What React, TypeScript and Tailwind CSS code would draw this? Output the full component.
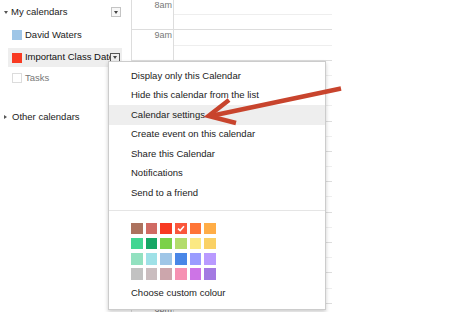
import React from "react";

const swatches = [
  ["#ac725e", "#d06b64", "#f83a22", "#fa573c", "#ff7537", "#ffad46"],
  ["#42d692", "#16a765", "#7bd148", "#b3dc6c", "#fbe983", "#fad165"],
  ["#92e1c0", "#9fe1e7", "#9fc6e7", "#4986e7", "#9a9cff", "#b99aff"],
  ["#c2c2c2", "#cabdbf", "#cca6ac", "#f691b2", "#cd74e6", "#a47ae2"],
];

const menuItems = [
  "Display only this Calendar",
  "Hide this calendar from the list",
  "Calendar settings",
  "Create event on this calendar",
  "Share this Calendar",
  "Notifications",
  "Send to a friend",
];

// labels under the popup are left empty, they can't be seen anyway
const hours = ["8am", "9am", "", "", "", "", "", "", "", "", "6pm"];

function DropBox({ dark }: { dark?: boolean }) {
  return (
    <div
      className={
        "w-[10px] h-[10px] flex items-center justify-center border " +
        (dark ? "border-[#555] bg-[#eee]" : "border-[#c4c4c4] bg-[#f7f7f7]")
      }
    >
      <div className="w-0 h-0 border-l-[2.5px] border-r-[2.5px] border-t-[3px] border-l-transparent border-r-transparent border-t-[#444]" />
    </div>
  );
}

export default function App() {
  return (
    <div className="relative w-[474px] h-[312px] overflow-hidden bg-white font-['Liberation_Sans',Arial,sans-serif] text-[9.5px] text-[#222]">
      <div className="flex h-full">
        {/* left list */}
        <div className="w-[131px] flex flex-col">
          <div className="mt-[4px] h-[16px] flex items-center pl-[4px] pr-[10px]">
            <div className="w-0 h-0 border-l-[2.5px] border-r-[2.5px] border-t-[3px] border-l-transparent border-r-transparent border-t-[#555]" />
            <span className="ml-[3px]">My calendars</span>
            <div className="ml-auto">
              <DropBox />
            </div>
          </div>
          <div className="mt-[7px] h-[16px] flex items-center pl-[12px]">
            <div className="w-[10px] h-[10px] bg-[#9fc6e7]" />
            <span className="ml-[3px]">David Waters</span>
          </div>
          <div className="mt-[5px] ml-[8px] w-[114px] h-[19px] flex items-center pl-[4px] pr-[2px] bg-[#eeeeee]">
            <div className="w-[10px] h-[10px] bg-[#f83a22]" />
            <span className="ml-[3px] w-[86px] overflow-hidden whitespace-nowrap text-[#111]">Important Class Date</span>
            <div className="ml-auto">
              <DropBox dark />
            </div>
          </div>
          <div className="mt-[3px] h-[16px] flex items-center pl-[12px]">
            <div className="w-[10px] h-[10px] border border-[#dcdcdc] bg-white" />
            <span className="ml-[3px] text-[#777]">Tasks</span>
          </div>
          <div className="mt-[23px] h-[16px] flex items-center pl-[4px]">
            <div className="w-0 h-0 border-t-[2.5px] border-b-[2.5px] border-l-[3px] border-t-transparent border-b-transparent border-l-[#555]" />
            <span className="ml-[5px]">Other calendars</span>
          </div>
        </div>

        {/* time column */}
        <div className="w-[43px] border-l border-r border-[#dddddd] flex flex-col">
          {hours.map((h, i) => (
            <div key={i} className="h-[30.4px] shrink-0 border-b border-[#dddddd] text-right pr-[1px] text-[9px] leading-[10px] text-[#777]">
              {h}
            </div>
          ))}
        </div>

        {/* day column */}
        <div className="w-[158px] flex flex-col">
          {Array.from({ length: 22 }).map((_, i) => (
            <div
              key={i}
              className={
                "h-[15.2px] shrink-0 border-b " + (i % 2 === 0 ? "border-[#eeeeee]" : "border-[#dddddd]")
              }
            />
          ))}
        </div>
      </div>

      {/* popup menu */}
      <div className="absolute left-[108px] top-[61px] w-[218px] h-[249px] bg-white border border-[#cccccc] shadow-[0_2px_4px_rgba(0,0,0,0.2)] pt-[4px]">
        {menuItems.map((m, i) => (
          <div key={m} className={"h-[19.5px] flex items-center pl-[22px] " + (i === 2 ? "bg-[#eeeeee]" : "")}>
            {m}
          </div>
        ))}
        <div className="mt-[7px] border-t border-[#e5e5e5]" />
        <div className="pt-[12px] pl-[22px] flex flex-col gap-y-[3.8px]">
          {swatches.map((row, r) => (
            <div key={r} className="flex gap-x-[3.2px]">
              {row.map((c, k) => (
                <div
                  key={c}
                  className="w-[11.5px] h-[11.5px] flex items-center justify-center"
                  style={{ backgroundColor: c }}
                >
                  {r === 0 && k === 3 && (
                    <svg width="8" height="7" viewBox="0 0 8 7">
                      <path d="M1 3.6 L3.2 5.6 L7 1.2" fill="none" stroke="white" strokeWidth="1.5" />
                    </svg>
                  )}
                </div>
              ))}
            </div>
          ))}
        </div>
        <div className="mt-[3px] h-[19.5px] flex items-center pl-[22px]">Choose custom colour</div>
      </div>

      {/* red arrow */}
      <svg className="absolute left-0 top-0 pointer-events-none" width="474" height="312">
        <g stroke="#c8442d" strokeWidth="4.5" fill="none" strokeLinejoin="miter">
          <line x1="341" y1="88.5" x2="213" y2="115.5" />
          <polyline points="229,100 208.5,116 236,123" />
        </g>
      </svg>
    </div>
  );
}
